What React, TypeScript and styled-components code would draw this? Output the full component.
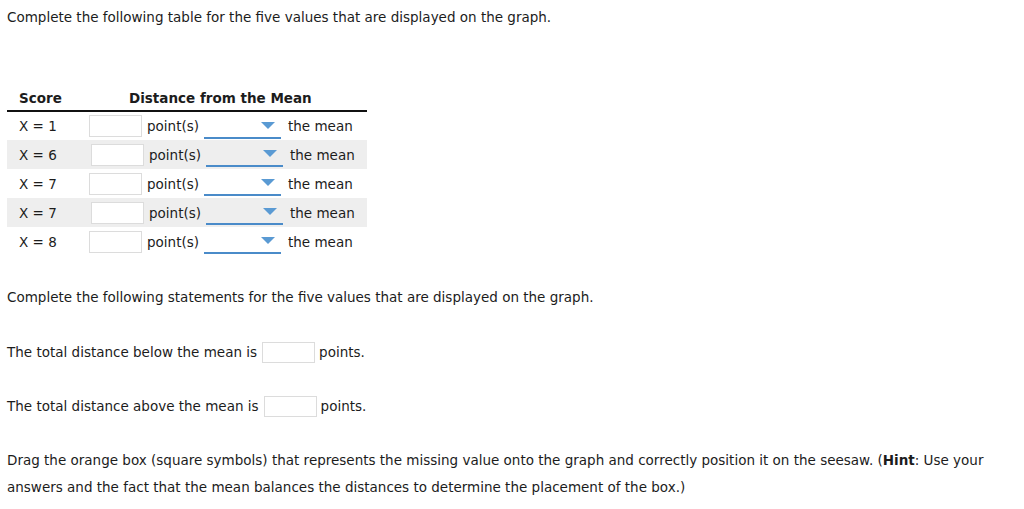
import styled, { createGlobalStyle } from "styled-components";

const rows = [
  { score: 1, alt: false },
  { score: 6, alt: true },
  { score: 7, alt: false },
  { score: 7, alt: true },
  { score: 8, alt: false },
];

export default function App() {
  return (
    <>
      <GlobalStyle />
      <Page>
        <Prompt>Complete the following table for the five values that are displayed on the graph.</Prompt>

        <Table>
          <thead>
            <tr>
              <HeadCell>Score</HeadCell>
              <HeadCell $indent={41}>Distance from the Mean</HeadCell>
            </tr>
          </thead>
          <tbody>
            {rows.map((row, index) => (
              <Row key={index} $alt={row.alt}>
                <ScoreCell>X = {row.score}</ScoreCell>
                <DistanceCell>
                  <Answer $shift={row.alt ? 3 : 1}>
                    <Box type="text" aria-label={`distance for X = ${row.score}`} />
                    <span>point(s)</span>
                    <Dropdown aria-label="above or below">
                      <Caret />
                    </Dropdown>
                    <span>the mean</span>
                  </Answer>
                </DistanceCell>
              </Row>
            ))}
          </tbody>
        </Table>

        <Heading>Complete the following statements for the five values that are displayed on the graph.</Heading>

        <Statement $gap={36}>
          The total distance below the mean is
          <Box type="text" aria-label="total below" $small />
          points.
        </Statement>
        <Statement $gap={32}>
          The total distance above the mean is
          <Box type="text" aria-label="total above" $small />
          points.
        </Statement>

        <Instructions>
          Drag the orange box (square symbols) that represents the missing value onto the graph and correctly
          position it on the seesaw. (<b>Hint</b>: Use your answers and the fact that the mean balances the
          distances to determine the placement of the box.)
        </Instructions>
      </Page>
    </>
  );
}

const GlobalStyle = createGlobalStyle`
  body {
    margin: 0;
    background: #fff;
  }
`;

const Page = styled.main`
  padding: 0 7px;
  color: #1c1c1c;
  font-family: "DejaVu Sans", Verdana, sans-serif;
  font-size: 13.5px;
`;

const Prompt = styled.p`
  margin: 9px 0 0;
  line-height: 16px;
`;

const Table = styled.table`
  width: 360px;
  margin-top: 60px;
  border-collapse: collapse;
`;

const HeadCell = styled.th<{ $indent?: number }>`
  height: 25px;
  padding: 0 0 0 ${(p) => p.$indent ?? 12}px;
  border-bottom: 2px solid #111;
  font-weight: 700;
  text-align: left;
  vertical-align: middle;
  white-space: nowrap;
`;

const Row = styled.tr<{ $alt: boolean }>`
  height: 29px;
  background: ${(p) => (p.$alt ? "#eeeeee" : "transparent")};
`;

const ScoreCell = styled.td`
  width: 69px;
  padding: 0 0 0 12px;
  white-space: nowrap;
`;

const DistanceCell = styled.td`
  padding: 0;
`;

const Answer = styled.div<{ $shift: number }>`
  display: flex;
  align-items: center;
  gap: 5px;
  padding-left: ${(p) => p.$shift}px;
  white-space: nowrap;

  & > span:last-child {
    margin-left: 2px;
  }
`;

const Box = styled.input<{ $small?: boolean }>`
  box-sizing: border-box;
  width: 53px;
  height: ${(p) => (p.$small ? 21 : 22)}px;
  margin: ${(p) => (p.$small ? "0 4px 0 5px" : "0")};
  padding: 0 4px;
  border: 1px solid #dcdcdc;
  border-radius: 0;
  background: #fff;
  font: inherit;
`;

const Dropdown = styled.span`
  position: relative;
  display: inline-block;
  box-sizing: border-box;
  width: 77px;
  height: 20px;
  margin-top: 5px;
  border-bottom: 2px solid #4a8bc9;
`;

const Caret = styled.span`
  position: absolute;
  top: 3px;
  right: 6px;
  width: 0;
  height: 0;
  border-left: 7px solid transparent;
  border-right: 7px solid transparent;
  border-top: 7px solid #5a9ad3;
`;

const Heading = styled.p`
  margin: 33px 0 0;
  line-height: 16px;
`;

const Statement = styled.div<{ $gap: number }>`
  display: flex;
  align-items: center;
  height: 22px;
  margin-top: ${(p) => p.$gap}px;
  white-space: nowrap;
`;

const Instructions = styled.p`
  margin: 30px 0 0;
  line-height: 27px;

  b {
    font-weight: 700;
  }
`;
